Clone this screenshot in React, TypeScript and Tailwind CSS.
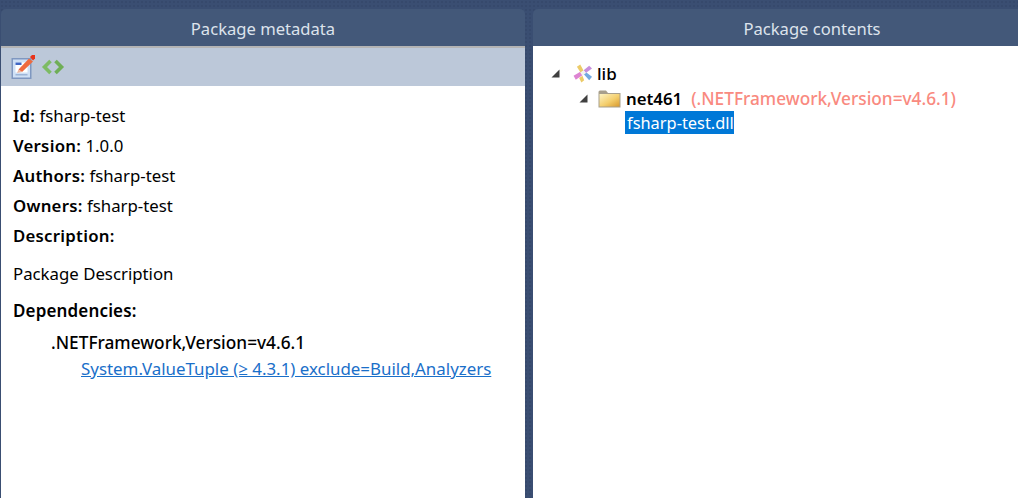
import React from 'react';

const font = "font-['Segoe_UI','Noto_Sans','Open_Sans',sans-serif]";

const EditIcon = () => (
  <svg width="24" height="24" viewBox="0 0 24 24">
    <rect x="0.5" y="3" width="20" height="21" fill="#7f97c0" />
    <rect x="2" y="4.5" width="17" height="18" fill="#cfe0f5" />
    <rect x="4.5" y="7.5" width="12" height="10" fill="#ffffff" />
    <rect x="4.5" y="7.5" width="6" height="2.5" fill="#3f66c4" />
    <rect x="4.5" y="19" width="12" height="1.5" fill="#9db5d8" />
    <path d="M7.5 14.5 L18 3.5 L22 6.5 L11 17 Z" fill="#ef6a3e" />
    <path d="M19 2 L21 0 L24 0 L24 3.5 L22 5.5 Z" fill="#e8331a" />
    <path d="M6 18 L7.5 14.5 L11 17 Z" fill="#e9b7a4" />
  </svg>
);

const CodeIcon = () => (
  <svg width="24" height="16" viewBox="0 0 24 16" fill="none">
    <path d="M9.5 2 L3.5 8 L9.5 14" stroke="#7dbb63" strokeWidth="3.6" />
    <path d="M14.5 2 L20.5 8 L14.5 14" stroke="#6fae56" strokeWidth="3.6" />
  </svg>
);

const Arrow = () => (
  <svg width="9" height="9" viewBox="0 0 9 9">
    <path d="M8.5 0.5 V8.5 H0.5 Z" fill="#404040" />
  </svg>
);

const LibIcon = () => (
  <svg width="21" height="19" viewBox="1 0.5 18 17">
    <path d="M2 11 L8 7.5 L10 10.5 L4 14.5 Z" fill="#dd84d2" />
    <path d="M11 6 L16 2 L18.5 4.5 L13 8.5 Z" fill="#c68fdc" />
    <path d="M11 9.5 L13.5 8 L18.5 12 L16 15 Z" fill="#72a9e0" />
    <path d="M5 3 L8 1 L11 6.5 L8.5 8.5 Z" fill="#eccb68" />
    <path d="M7 13 L10 11 L11.5 15 L9 17 Z" fill="#eccb68" />
    <path d="M8 8 L11 6 L13 8.5 L10 11 Z" fill="#f2f2f2" />
  </svg>
);

const FolderIcon = () => (
  <svg width="23" height="18" viewBox="0 0 23 18">
    <defs>
      <linearGradient id="folderFill" x1="0" y1="0" x2="1" y2="1">
        <stop offset="0" stopColor="#fdf3c4" />
        <stop offset="0.55" stopColor="#f4cf6e" />
        <stop offset="1" stopColor="#d99a2e" />
      </linearGradient>
    </defs>
    <path d="M0.5 2 Q0.5 0.5 2 0.5 H8 L10 3 H22.5 V17.5 H0.5 Z" fill="#a89f8c" />
    <rect x="1.5" y="4" width="20" height="12.5" fill="url(#folderFill)" />
  </svg>
);

const Header = ({ title }: { title: string }) => (
  <div className="h-[37px] shrink-0 rounded-t-[5px] bg-[#435879] text-center text-[16.6px] leading-[39px] text-[#dde3ec]">
    {title}
  </div>
);

const Line = ({ label, value }: { label: string; value?: string }) => (
  <div className="h-[30px] text-[16.8px] leading-[30px]">
    <span className="font-semibold tracking-[0.25px]">{label}</span>
    {value && <span> {value}</span>}
  </div>
);

export default function App() {
  return (
    <div className={`${font} h-[498px] w-[1018px] overflow-hidden bg-[#3a4e72] bg-[radial-gradient(#36496c_1px,transparent_1px)] bg-[size:4px_4px] pl-px pt-[9px] text-black`}>
      <div className="flex h-[489px] w-[1090px] gap-2">
        {/* Metadata panel */}
        <div className="flex w-[524px] shrink-0 flex-col">
          <Header title="Package metadata" />
          <div className="flex h-[40px] shrink-0 items-center gap-[6px] border-t-2 border-[#b4b4b4] bg-[#bcc8d9] pl-[10px]">
            <EditIcon />
            <CodeIcon />
          </div>
          <div className="flex-1 bg-white pl-[12px] pt-[15px]">
            <Line label="Id:" value="fsharp-test" />
            <Line label="Version:" value="1.0.0" />
            <Line label="Authors:" value="fsharp-test" />
            <Line label="Owners:" value="fsharp-test" />
            <Line label="Description:" />
            <div className="mt-[8px] h-[30px] text-[16.8px] leading-[30px]">Package Description</div>
            <div className="mt-[7px] h-[30px] text-[17px] font-semibold tracking-[0.15px] leading-[30px]">Dependencies:</div>
            <div className="mt-[6px] pl-[38px] text-[17.25px] font-medium leading-[22px]">.NETFramework,Version=v4.6.1</div>
            <div className="mt-[3px] pl-[68px] text-[16.9px] leading-[24px] text-[#1a6fc9] underline">
              System.ValueTuple (≥ 4.3.1) exclude=Build,Analyzers
            </div>
          </div>
        </div>

        {/* Contents panel, runs past the window edge */}
        <div className="flex flex-1 flex-col">
          <Header title="Package contents" />
          <div className="flex-1 bg-white pl-[18px] pt-[15px] text-[17px]">
            <div className="flex h-[25px] items-center">
              <Arrow />
              <span className="ml-[12px] flex"><LibIcon /></span>
              <span className="ml-[4px] font-medium">lib</span>
            </div>
            <div className="flex h-[25px] items-center pl-[28px]">
              <Arrow />
              <span className="ml-[10px] flex"><FolderIcon /></span>
              <span className="ml-[5px] font-semibold text-[16.8px]">net461</span>
              <span className="ml-[9px] text-[17.25px] font-medium text-[#f98a80]">(.NETFramework,Version=v4.6.1)</span>
            </div>
            <div className="flex pl-[74px]">
              <span className="h-[23px] bg-[#0078d7] pl-[2px] text-[16.4px] leading-[23px] text-white">fsharp-test.dll</span>
            </div>
          </div>
        </div>
      </div>
    </div>
  );
}
